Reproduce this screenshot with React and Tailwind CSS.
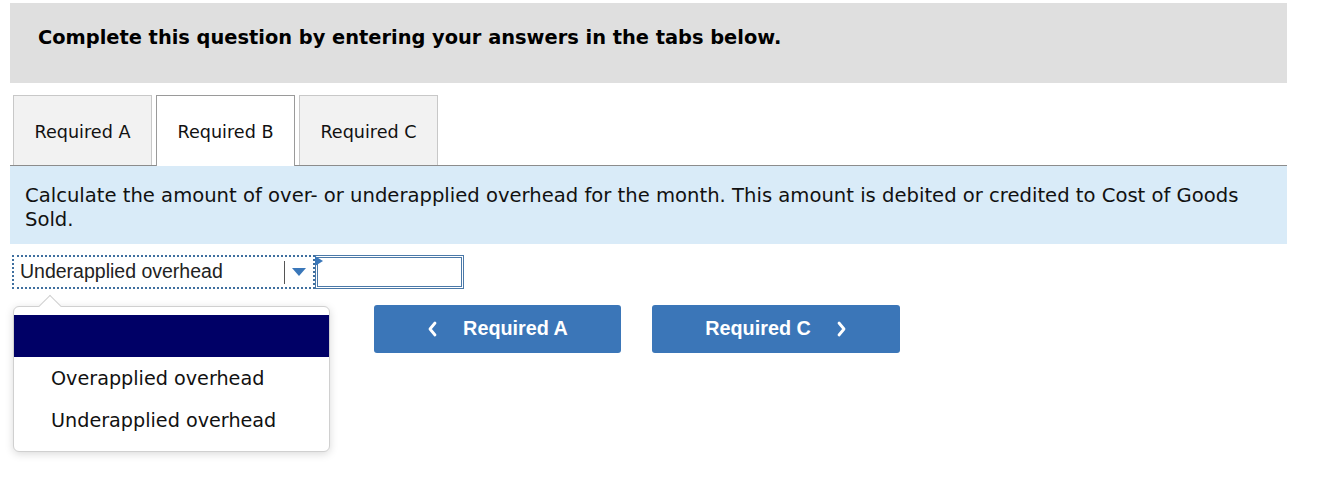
import React from "react";

const verdana = { fontFamily: '"DejaVu Sans", Verdana, sans-serif' };
const arial = { fontFamily: '"Liberation Sans", Arial, sans-serif' };

function Tab({ label, active }) {
  return (
    <div
      className={`w-[139px] pt-[3px] flex items-center justify-center text-[17.6px] text-[#111] border ${
        active ? "h-[71px] bg-white border-[#9a9a9a] border-b-0 -mb-px" : "h-[70px] bg-[#f2f2f2] border-[#c8c8c8] border-b-0"
      }`}
    >
      {label}
    </div>
  );
}

function Chevron({ dir }) {
  return (
    <svg width="12" height="16" viewBox="0 0 12 16" fill="none" stroke="white" strokeWidth="2.8" strokeLinecap="round" strokeLinejoin="round">
      {dir === "left" ? <path d="M8 2 L3 8 L8 14" /> : <path d="M4 2 L9 8 L4 14" />}
    </svg>
  );
}

export default function App() {
  return (
    <div className="min-h-screen bg-white px-[10px] pt-[3px] w-[1297px]" style={verdana}>
      <div className="h-[80px] bg-[#dfdfdf] pl-[28px] pt-[21px]">
        <h1 className="text-[19.4px] leading-[28px] font-bold text-black">
          Complete this question by entering your answers in the tabs below.
        </h1>
      </div>

      <div className="mt-[12px] flex items-end gap-[4px] pl-[3px] border-b border-[#8c8c8c]">
        <Tab label="Required A" />
        <Tab label="Required B" active />
        <Tab label="Required C" />
      </div>

      <div className="bg-[#d9ebf8] pl-[15px] pr-[40px] pt-[18px] pb-[12px] text-[19.6px] leading-[24px] text-[#111]">
        Calculate the amount of over- or underapplied overhead for the month. This amount is debited or credited to Cost of Goods
        Sold.
      </div>

      <div className="relative mt-[11px]">
        <div className="flex items-start">
          <div className="ml-[2px] w-[303px] h-[34px] border-2 border-dotted border-[#3f6f9f] flex items-center">
            <span className="flex-1 pl-[6px] text-[19.5px] text-[#222]" style={arial}>
              Underapplied overhead
            </span>
            <span className="h-[23px] w-px bg-[#555]" />
            <span className="w-[28px] flex justify-center">
              <svg width="14" height="8" viewBox="0 0 14 8">
                <path d="M0 0 H14 L7 8 Z" fill="#3a77b9" />
              </svg>
            </span>
          </div>
          <div className="relative w-[149px] h-[34px] border-[3px] border-double border-[#4b79a8] bg-white">
            <svg className="absolute -left-[3px] -top-[2px]" width="8" height="10" viewBox="0 0 8 10">
              <path d="M0 0 L8 5 L0 10 Z" fill="#3a77b9" />
            </svg>
          </div>
        </div>

        <div className="flex gap-[31px] ml-[364px] mt-[16px]" style={arial}>
          <button className="w-[247px] h-[48px] rounded-[3px] bg-[#3b76b8] text-white text-[19.8px] font-bold flex items-center justify-center gap-[24px]">
            <Chevron dir="left" />
            Required A
          </button>
          <button className="w-[248px] h-[48px] rounded-[3px] bg-[#3b76b8] text-white text-[19.8px] font-bold flex items-center justify-center gap-[24px]">
            Required C
            <Chevron dir="right" />
          </button>
        </div>

        <div className="absolute left-[3px] top-[51px] w-[317px] h-[146px] bg-white border border-[#d0d0d0] rounded-[6px] shadow-[0_2px_8px_rgba(0,0,0,0.15)]">
          <div className="absolute left-[28px] -top-[9px] w-[16px] h-[16px] bg-white border-l border-t border-[#d0d0d0] rotate-45" />
          <div className="relative mt-[8px] h-[42px] bg-[#000066]" />
          <div className="pl-[37px] pt-[1px] text-[19.2px] leading-[42px] text-[#111]">
            <div>Overapplied overhead</div>
            <div>Underapplied overhead</div>
          </div>
        </div>
      </div>
    </div>
  );
}
